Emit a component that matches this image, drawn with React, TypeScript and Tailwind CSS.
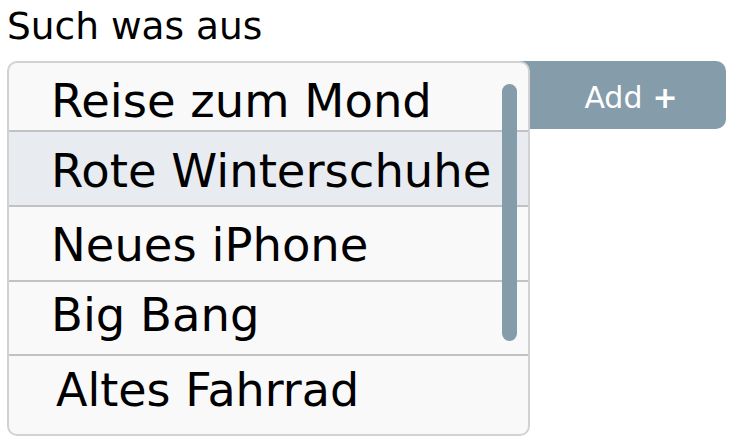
const rows = [
    { label: 'Reise zum Mond', h: 'h-[69px]', pt: 'pt-[12px]', active: false },
    { label: 'Rote Winterschuhe', h: 'h-[75px]', pt: 'pt-[13px]', active: true },
    { label: 'Neues iPhone', h: 'h-[75px]', pt: 'pt-[12px]', active: false },
    { label: 'Big Bang', h: 'h-[74px]', pt: 'pt-[7px]', active: false },
]

export default function App() {
    return (
        <div className="min-h-screen bg-white pl-[7px] font-['DejaVu_Sans',sans-serif] text-black">
            <div className="pt-[5px] text-[37.5px] leading-[42px] mb-[14px]">Such was aus</div>

            <div className="flex items-start">
                {/* list box */}
                <div className="relative z-10 w-[523px] h-[375px] bg-[#f9f9f9] border-2 border-[#d2d2d2] rounded-[10px] overflow-hidden">
                    <div className="relative">
                        {rows.map(r => (
                            <div
                                key={r.label}
                                className={`${r.h} ${r.pt} pl-[42px] border-b-2 border-[#c2c2c2] text-[46.5px] leading-[52px] whitespace-nowrap ${r.active ? 'bg-[#e8ebf0]' : ''}`}
                            >
                                {r.label}
                            </div>
                        ))}
                        {/* scrollbar thumb */}
                        <div className="absolute top-[21px] left-[493px] w-[15px] h-[257px] rounded-full bg-[#859cab]" />
                    </div>
                    <div className="h-[78px] pt-[8px] pl-[47px] text-[46px] leading-[52px] whitespace-nowrap">Altes Fahrrad</div>
                </div>

                {/* add button */}
                <button className="-ml-[23px] pl-[29px] pt-[4px] w-[219px] h-[68px] rounded-r-[10px] bg-[#859cab] text-white text-[30px] flex items-center justify-center">
                    Add <span className="ml-[10px] font-bold">+</span>
                </button>
            </div>
        </div>
    )
}
